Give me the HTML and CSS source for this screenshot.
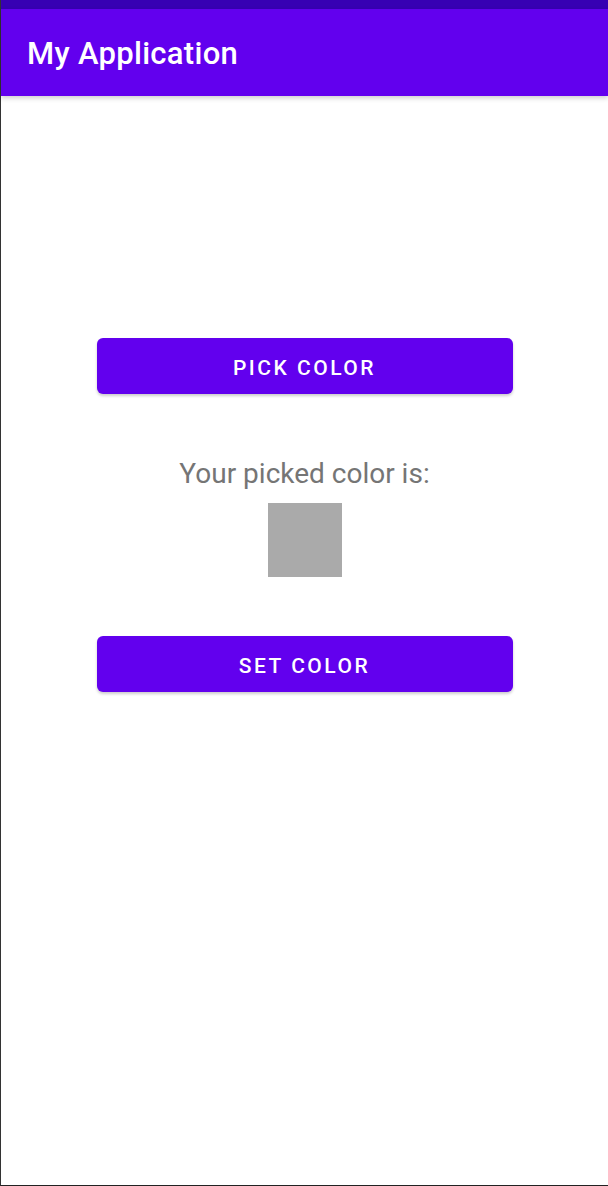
FILE: index.html
```html
<!DOCTYPE html>
<html lang="en">
<head>
    <meta charset="UTF-8">
    <meta name="viewport" content="width=device-width, initial-scale=1.0">
    <title>My Application</title>
    <link rel="stylesheet" href="styles.css">
</head>
<body>
    <div class="screen">
        <div class="status-bar"></div>
        <div class="app-bar">
            <h1 class="title">My Application</h1>
        </div>
        <div class="content">
            <button class="action-btn">Pick Color</button>
            <div class="picked-label">Your picked color is:</div>
            <div class="swatch"></div>
            <button class="action-btn">Set Color</button>
        </div>
    </div>
</body>
</html>
```

FILE: styles.css
```css
html, body {
    margin: 0;
    padding: 0;
    height: 100%;
}
body {
    font-family: Roboto, "Noto Sans", Arial, sans-serif;
    background-color: #ffffff;
}
.screen {
    box-sizing: border-box;
    height: 1186px;
    border-left: 1px solid #333333;
    border-bottom: 1px solid #222222;
    display: flex;
    flex-direction: column;
}
.status-bar {
    height: 9px;
    background-color: #3700b3;
}
.app-bar {
    height: 87px;
    background-color: #6200ee;
    display: flex;
    align-items: center;
    padding-left: 26px;
    box-shadow: 0 2px 5px rgba(0, 0, 0, 0.2);
    position: relative;
    z-index: 1;
}
.title {
    margin: 0 0 -2px;
    color: #ffffff;
    font-size: 31px;
    font-weight: 500;
    letter-spacing: 0.3px;
}
.content {
    flex: 1;
    display: flex;
    flex-direction: column;
    align-items: center;
    padding-top: 242px;
}
.action-btn {
    width: 416px;
    height: 56px;
    padding: 3px 0 0;
    background-color: #6200ee;
    border: none;
    border-radius: 6px;
    color: #ffffff;
    font-family: Roboto, Arial, sans-serif;
    font-size: 21px;
    font-weight: 500;
    letter-spacing: 2.5px;
    text-transform: uppercase;
    box-shadow: 0 2px 3px rgba(0, 0, 0, 0.2);
    cursor: pointer;
}
.picked-label {
    margin-top: 64px;
    color: #757575;
    font-size: 28px;
    line-height: 32px;
}
.swatch {
    width: 74px;
    height: 74px;
    margin-top: 13px;
    background-color: #aaaaaa;
}
.swatch + .action-btn {
    margin-top: 59px;
}
```
